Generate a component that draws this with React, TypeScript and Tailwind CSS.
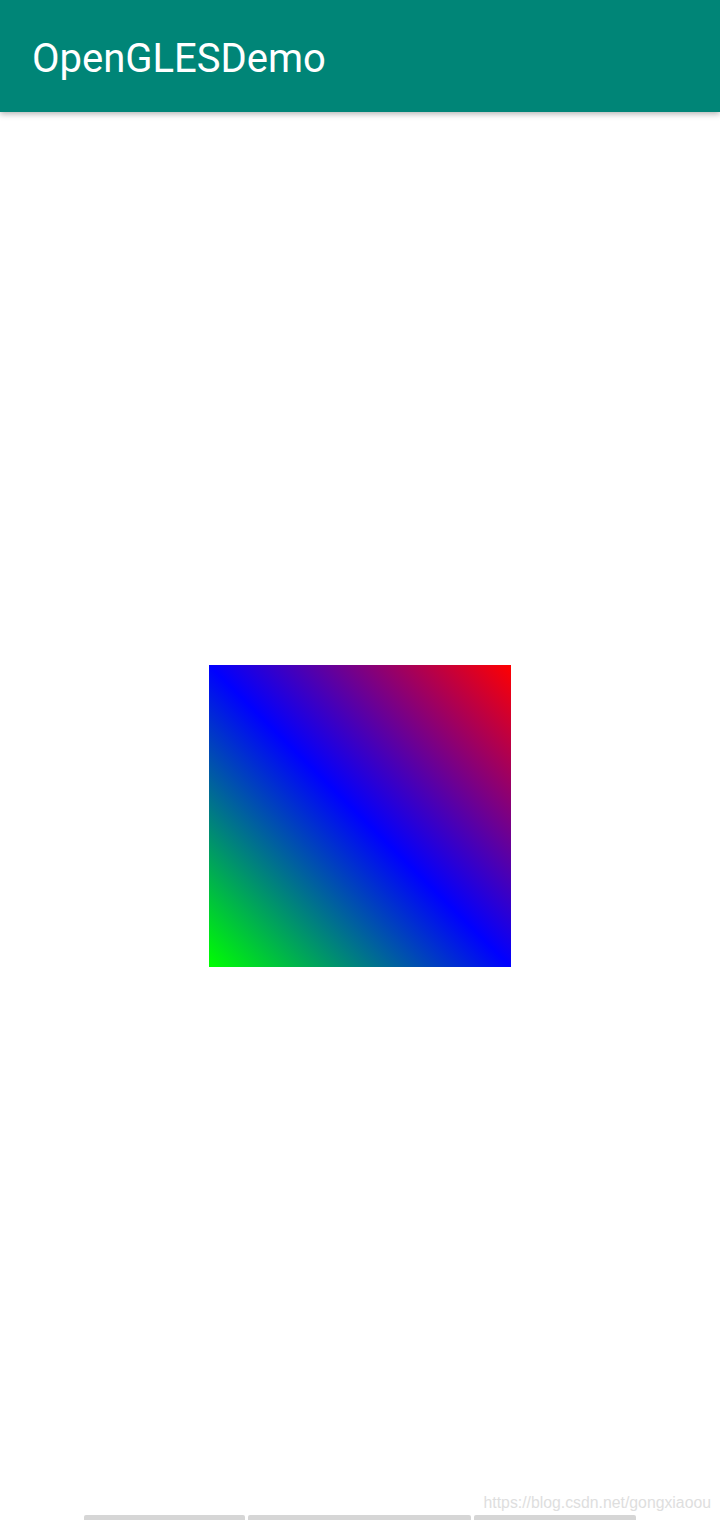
import React from 'react';

const App: React.FC = () => {
  return (
    <div className="relative flex flex-col w-[720px] h-[1520px] bg-white overflow-hidden" style={{ fontFamily: 'Roboto, "Noto Sans", sans-serif' }}>
      <header className="relative z-10 h-[112px] flex items-center px-[32px] pt-[5px] bg-[#008577] shadow-[0_2px_6px_rgba(0,0,0,0.3)]">
        <h1 className="text-white text-[40px] leading-none font-normal tracking-normal">OpenGLESDemo</h1>
      </header>

      <main className="flex-1 flex items-center justify-center">
        <div className="w-[302px] h-[302px] bg-[linear-gradient(to_top_right,#00ff00_0%,#0000ff_50%,#ff0000_100%)]" />
      </main>

      {/* watermark + bottom bars lie over the page */}
      <div
        className="absolute right-[9px] bottom-[9px] text-[15.8px] leading-none text-[#dedede]"
        style={{ fontFamily: '"Liberation Sans", Arial, sans-serif' }}
      >
        https://blog.csdn.net/gongxiaoou
      </div>
      <div className="absolute left-[84px] bottom-0 flex gap-[3px] h-[5px]">
        <div className="w-[161px] h-full bg-[#d6d6d6] rounded-t-[2px]" />
        <div className="w-[223px] h-full bg-[#d6d6d6] rounded-t-[2px]" />
        <div className="w-[162px] h-full bg-[#d6d6d6] rounded-t-[2px]" />
      </div>
    </div>
  );
};

export default App;
